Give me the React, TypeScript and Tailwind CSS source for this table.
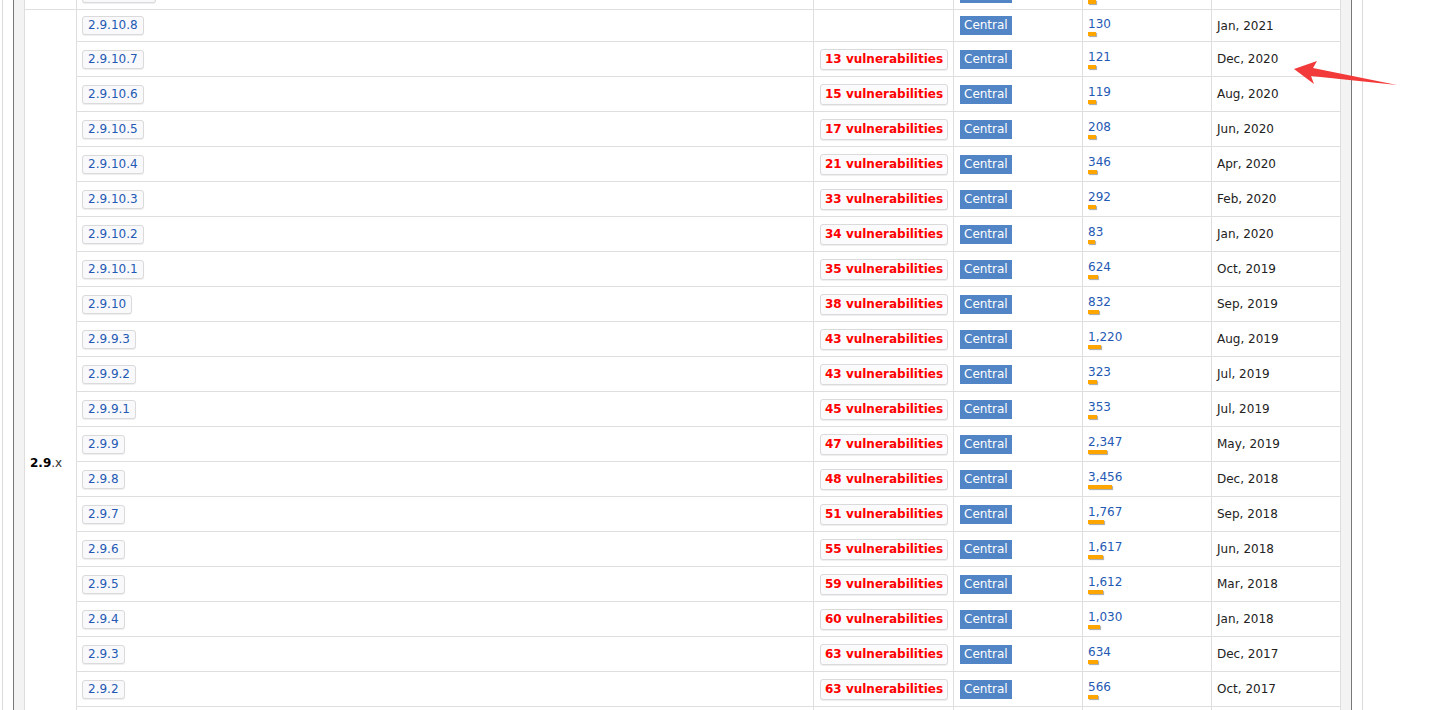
type Row = [string, number, number, string]

const prevRow: Row = ['2.10.0.pr1', 0, 140, '']

const rows: Row[] = [
  ['2.9.10.8', 0, 130, 'Jan, 2021'],
  ['2.9.10.7', 13, 121, 'Dec, 2020'],
  ['2.9.10.6', 15, 119, 'Aug, 2020'],
  ['2.9.10.5', 17, 208, 'Jun, 2020'],
  ['2.9.10.4', 21, 346, 'Apr, 2020'],
  ['2.9.10.3', 33, 292, 'Feb, 2020'],
  ['2.9.10.2', 34, 83, 'Jan, 2020'],
  ['2.9.10.1', 35, 624, 'Oct, 2019'],
  ['2.9.10', 38, 832, 'Sep, 2019'],
  ['2.9.9.3', 43, 1220, 'Aug, 2019'],
  ['2.9.9.2', 43, 323, 'Jul, 2019'],
  ['2.9.9.1', 45, 353, 'Jul, 2019'],
  ['2.9.9', 47, 2347, 'May, 2019'],
  ['2.9.8', 48, 3456, 'Dec, 2018'],
  ['2.9.7', 51, 1767, 'Sep, 2018'],
  ['2.9.6', 55, 1617, 'Jun, 2018'],
  ['2.9.5', 59, 1612, 'Mar, 2018'],
  ['2.9.4', 60, 1030, 'Jan, 2018'],
  ['2.9.3', 63, 634, 'Dec, 2017'],
  ['2.9.2', 63, 566, 'Oct, 2017'],
  ['2.9.1', 63, 642, 'Sep, 2017'],
  ['2.9.0', 63, 905, 'Jul, 2017'],
  ['2.9.0.pr4', 63, 52, 'Jun, 2017'],
  ['2.9.0.pr3', 63, 47, 'Apr, 2017'],
  ['2.9.0.pr2', 63, 41, 'Mar, 2017'],
  ['2.9.0.pr1', 63, 39, 'Feb, 2017'],
]

const VersionRow = ({ row }: { row: Row }) => {
  const [version, vulns, usages, date] = row
  const barWidth = Math.round(7 + (usages * 17) / 3456)
  return (
    <div
      className={`grid grid-cols-[736px_140px_129px_129px_129px] border-b border-[#dedede] ${
        vulns ? 'h-[35px]' : 'h-[32px]'
      }`}
    >
      <div className="flex items-center pl-[5px]">
        <span className="rounded-[3px] border border-[#dadada] bg-[#f9f9fc] px-[5px] py-px leading-[15px] text-[#2459b3] shadow-[0_1px_1px_rgba(0,0,0,0.07)]">
          {version}
        </span>
      </div>
      <div className="flex items-center border-l border-[#dedede] pl-[6px]">
        {vulns > 0 && (
          <span className="rounded-[3px] border border-[#dadada] bg-[#fbfbfd] px-[4px] py-[2px] font-bold leading-[15px] text-[#ff0000] shadow-[0_1px_1px_rgba(0,0,0,0.07)]">
            {vulns} vulnerabilities
          </span>
        )}
      </div>
      <div className="flex items-center border-l border-[#dedede] pl-[6px]">
        <span className="bg-[#5185c6] px-[4px] py-[2px] leading-[15px] text-white">Central</span>
      </div>
      <div className="flex flex-col justify-center border-l border-[#dedede] pl-[5px]">
        <span className="leading-[16px] text-[#2459b3]">{usages.toLocaleString('en-US')}</span>
        <span
          className="block h-[4px] bg-[#ffa500] shadow-[1px_1px_1px_rgba(0,0,0,0.35)]"
          style={{ width: barWidth }}
        />
      </div>
      <div className="flex items-center border-l border-[#dedede] pl-[5px] text-[#222]">{date}</div>
    </div>
  )
}

const App = () => {
  return (
    <div className="relative h-[710px] w-[1453px] overflow-hidden bg-white font-['DejaVu_Sans',sans-serif] text-[12px]">
      <div className="ml-[2px] h-full w-[1361px] border-x border-[#dcdcdc] px-[10px]">
        <div className="flex h-full flex-col border-x border-[#777] bg-[#f3f3f3] px-[10px]">
          <div className="-mt-[22px] w-[1317px] shrink-0 border-x border-[#dedede] bg-white">
            <div className="flex">
              <div className="w-[52px] border-r border-b border-[#dedede]" />
              <div className="flex-1">
                <VersionRow row={prevRow} />
              </div>
            </div>
            <div className="flex">
              <div className="flex w-[52px] items-center border-r border-b border-[#dedede] pl-[5px] text-[#333]">
                <span className="font-bold text-black">2.9</span>.x
              </div>
              <div className="flex-1">
                {rows.map((r) => (
                  <VersionRow key={r[0]} row={r} />
                ))}
              </div>
            </div>
          </div>
        </div>
      </div>
      <svg className="pointer-events-none absolute left-0 top-0" width="1453" height="710">
        <polygon points="1294,69 1317,61 1313,68 1397,85 1311,76 1314,84" fill="#f23a3a" />
      </svg>
    </div>
  )
}

export default App
